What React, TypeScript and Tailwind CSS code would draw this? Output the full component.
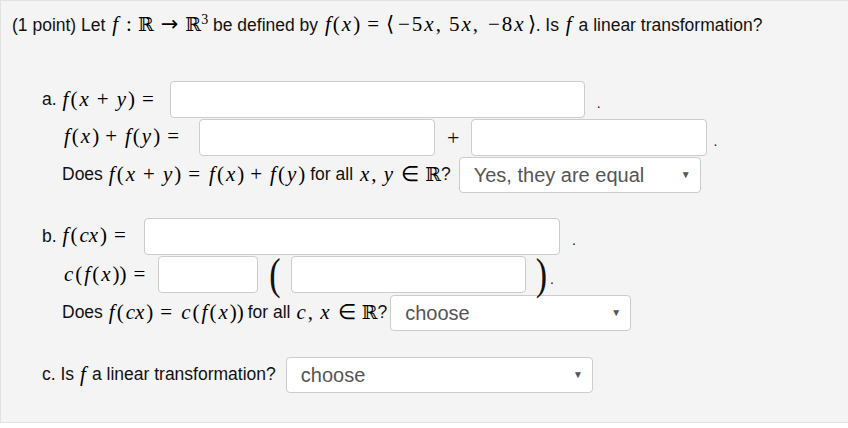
import React from 'react';

const mathFont = "[font-family:'Liberation_Serif',serif]";

// variables get a little side padding so the serif italic runs as wide as TeX math
const V = ({ children }: { children: React.ReactNode }) => (
  <span className="px-[2px] italic">{children}</span>
);

const Op = ({ children, m = 7 }: { children: React.ReactNode; m?: number }) => (
  <span style={{ marginLeft: m, marginRight: m }}>{children}</span>
);

const R = () => (
  <span className="[font-family:'DejaVu_Serif',serif] text-[19px]">ℝ</span>
);

const M = ({ children }: { children: React.ReactNode }) => (
  <span className={`${mathFont} whitespace-nowrap text-[21px] text-black`}>{children}</span>
);

const Field = ({ w }: { w: number }) => (
  <div
    className="h-[37px] shrink-0 rounded-[4px] border border-[#cccccc] bg-white"
    style={{ width: w }}
  />
);

const Choice = ({ w, label, ml = 5 }: { w: number; label: string; ml?: number }) => (
  <div
    className="flex h-[36px] shrink-0 items-center justify-between rounded-[4px] border border-[#cccccc] bg-white pl-[14px] pr-[9px]"
    style={{ width: w, marginLeft: ml }}
  >
    <span className="text-[20px] text-[#555555]">{label}</span>
    <span className="text-[10px] text-[#555555]">▼</span>
  </div>
);

const Dot = ({ ml = 12 }: { ml?: number }) => (
  <span className="self-end pb-[8px] text-[14px] leading-none" style={{ marginLeft: ml }}>
    .
  </span>
);

const Paren = ({ children }: { children: React.ReactNode }) => (
  <span className={`${mathFont} scale-y-[1.3] text-[34px] font-light leading-none`}>{children}</span>
);

const Comma = () => <span className="mr-[8px]">,</span>;

export default function App() {
  return (
    <div className="min-h-screen bg-white [font-family:'Liberation_Sans',Arial,sans-serif] text-[17.5px] text-[#111]">
      <div className="h-[423px] w-[860px] border border-r-0 border-[#e2e2e2] bg-[#f4f4f4] pl-[11px] pt-[11px]">
        <div className="flex h-[26px] items-center">
          <span>(1 point) Let&nbsp;</span>
          <M>
            <V>f</V>
            <Op m={6}>:</Op>
            <R />
            <Op m={7}>
              <span className="[font-family:'DejaVu_Sans',sans-serif]">→</span>
            </Op>
            <R />
            <sup className="text-[14px]">3</sup>
          </M>
          <span>&nbsp;be defined by&nbsp;</span>
          <M>
            <V>f</V>(<V>x</V>)<Op>=</Op>
            <span className="pr-[2px]">⟨</span>
            <span className="px-[2px]">−</span>5<V>x</V>
            <Comma />5<V>x</V>
            <Comma />
            <span className="px-[2px]">−</span>8<V>x</V>
            <span className="pl-[2px]">⟩</span>
          </M>
          <span>. Is&nbsp;</span>
          <M>
            <V>f</V>
          </M>
          <span>&nbsp;a linear transformation?</span>
        </div>

        <div className="mt-[43px] pl-[30px]">
          <div className="flex h-[37px] items-center">
            <span className="mr-[4px]">a.</span>
            <M>
              <V>f</V>(<V>x</V>
              <Op m={6}>+</Op>
              <V>y</V>)<Op>=</Op>
            </M>
            <div className="ml-[9px]">
              <Field w={415} />
            </div>
            <Dot />
          </div>
          <div className="flex h-[38px] items-center pl-[20px]">
            <M>
              <V>f</V>(<V>x</V>)<Op m={6}>+</Op>
              <V>f</V>(<V>y</V>)<Op>=</Op>
            </M>
            <div className="ml-[13px]">
              <Field w={236} />
            </div>
            <span className={`${mathFont} mx-[12px] text-[22px]`}>+</span>
            <Field w={236} />
            <Dot ml={6} />
          </div>
          <div className="flex h-[37px] items-center pl-[20px]">
            <span className="mr-[4px]">Does</span>
            <M>
              <V>f</V>(<V>x</V>
              <Op m={6}>+</Op>
              <V>y</V>)<Op>=</Op>
              <V>f</V>(<V>x</V>)<Op m={6}>+</Op>
              <V>f</V>(<V>y</V>)
            </M>
            <span className="mx-[5px]">for all</span>
            <M>
              <V>x</V>,&nbsp;<V>y</V>
              <Op m={6}>∈</Op>
              <R />
            </M>
            <span>?</span>
            <Choice w={242} label="Yes, they are equal" ml={8} />
          </div>
        </div>

        <div className="mt-[24px] pl-[30px]">
          <div className="flex h-[38px] items-center">
            <span className="mr-[4px]">b.</span>
            <M>
              <V>f</V>(<V>cx</V>)<Op>=</Op>
            </M>
            <div className="ml-[11px]">
              <Field w={416} />
            </div>
            <Dot />
          </div>
          <div className="flex h-[39px] items-center pl-[20px]">
            <M>
              <V>c</V>(<V>f</V>(<V>x</V>))<Op>=</Op>
            </M>
            <div className="ml-[6px] mr-[11px]">
              <Field w={100} />
            </div>
            <Paren>(</Paren>
            <div className="ml-[10px] mr-[10px]">
              <Field w={235} />
            </div>
            <Paren>)</Paren>
            <Dot ml={3} />
          </div>
          <div className="flex h-[37px] items-center pl-[20px]">
            <span className="mr-[4px]">Does</span>
            <M>
              <V>f</V>(<V>cx</V>)<Op>=</Op>
              <V>c</V>(<V>f</V>(<V>x</V>))
            </M>
            <span className="mx-[4px]">for all</span>
            <M>
              <V>c</V>,&nbsp;<V>x</V>
              <Op m={6}>∈</Op>
              <R />
            </M>
            <span>?</span>
            <Choice w={241} label="choose" ml={3} />
          </div>
        </div>

        <div className="mt-[25px] flex h-[37px] items-center pl-[30px]">
          <span className="mr-[4px]">c. Is</span>
          <M>
            <V>f</V>
          </M>
          <span className="ml-[4px] mr-[5px]">a linear transformation?</span>
          <Choice w={307} label="choose" />
        </div>
      </div>
    </div>
  );
}
